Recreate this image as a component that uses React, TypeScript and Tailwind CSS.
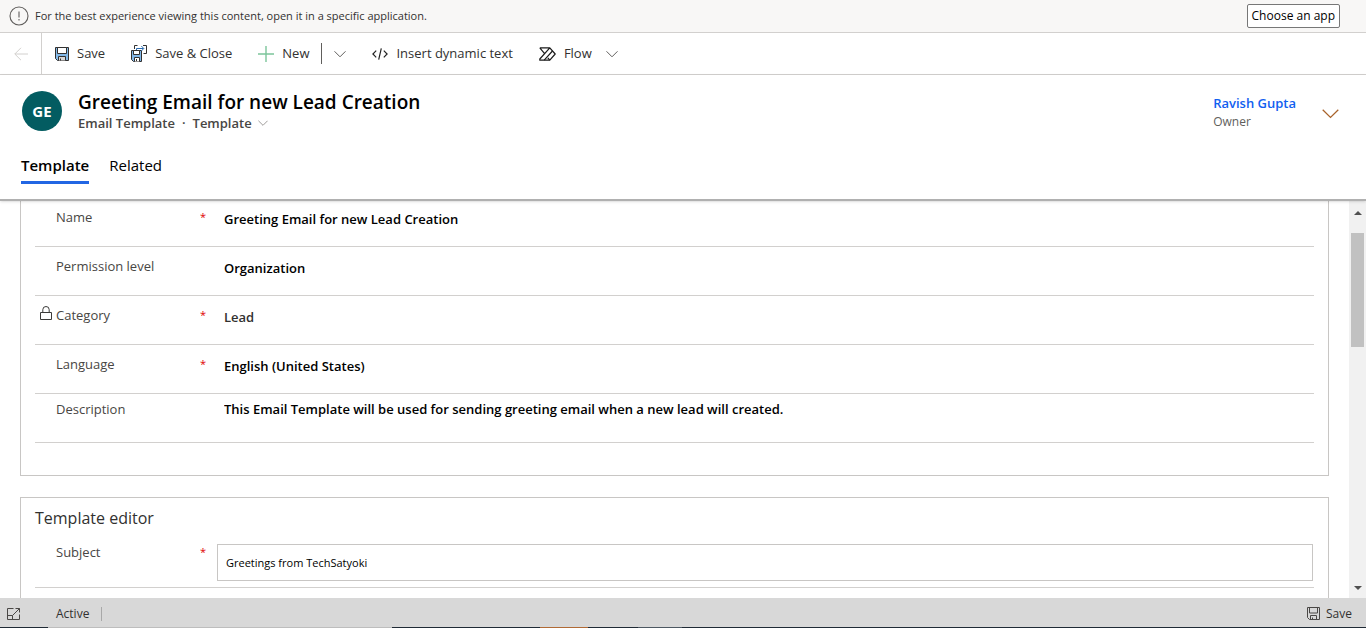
import type { ReactNode } from "react";

// Data Types
type Field = {
  id: string;
  label: string;
  value: string;
  required?: boolean;
  locked?: boolean;
  compact?: boolean;
};

const fields: Field[] = [
  { id: "name", label: "Name", value: "Greeting Email for new Lead Creation", required: true },
  { id: "permission", label: "Permission level", value: "Organization" },
  { id: "category", label: "Category", value: "Lead", required: true, locked: true },
  { id: "language", label: "Language", value: "English (United States)", required: true },
  {
    id: "description",
    label: "Description",
    value: "This Email Template will be used for sending greeting email when a new lead will created.",
    compact: true,
  },
];

// Colour strip along the bottom edge
const edge = [
  { width: 48, className: "bg-[#1f2a35]" },
  { width: 344, className: "bg-[#bdbdbd]" },
  { width: 148, className: "bg-[#1f2a35]" },
  { width: 48, className: "bg-[#b06a35]" },
  { width: 50, className: "bg-[#1f2a35]" },
  { width: 44, className: "bg-[#4d5862]" },
];

// Icons
const Chevron = ({ className, width = 12 }: { className: string; width?: number }) => (
  <svg width={width} height={width} viewBox="0 0 12 12" fill="none" stroke="currentColor" className={className} aria-hidden="true">
    <path d="M.5 3.3 6 8.8l5.5-5.5" strokeWidth={width > 14 ? 0.9 : 1} />
  </svg>
);

const InfoIcon = () => (
  <svg width="20" height="20" viewBox="0 0 20 20" fill="none" stroke="#605e5c" aria-hidden="true">
    <circle cx="10" cy="10" r="9" strokeWidth="1.1" />
    <path d="M10 5.5v6M10 13v1.5" strokeWidth="1.1" />
  </svg>
);

const BackIcon = () => (
  <svg width="14" height="14" viewBox="0 0 14 14" fill="none" stroke="#d2d0ce" aria-hidden="true">
    <path d="M14 7H.8M7 .8.8 7 7 13.2" />
  </svg>
);

const SaveIcon = () => (
  <svg width="14" height="14" viewBox="0 0 14 14" fill="none" stroke="#323130" aria-hidden="true">
    <path d="M.5.5h13v13h-11l-2-2z" fill="#83b9e8" />
    <path d="M2.5.5h9v6h-9z" fill="#fff" />
    <path d="M3.5 13.5v-4h7v4" fill="#d8d8d8" />
    <path d="M5.5 11.5v2" />
  </svg>
);

const SaveCloseIcon = () => (
  <svg width="16" height="17" viewBox="0 0 16 17" fill="none" stroke="#323130" aria-hidden="true">
    <path d="M.5 5.5h10v11h-8l-2-2z" fill="#83b9e8" />
    <path d="M2.5 5.5h6v4h-6z" fill="#fff" />
    <path d="M3.5 16.5v-4h5v4M5.5 14v2" fill="#fff" />
    <path d="M3.5 4V.5h3M12 .5h3.5v8h-3" />
    <path d="M5.5 5V3.5h7M10.3 1l2.5 2.5L10.3 6" stroke="#2b6cb0" />
  </svg>
);

const PlusIcon = () => (
  <svg width="16" height="16" viewBox="0 0 16 16" fill="none" stroke="#7cc59b" aria-hidden="true">
    <path d="M8 0v16M0 8h16" strokeWidth="1.4" />
  </svg>
);

const CodeIcon = () => (
  <svg width="16" height="12" viewBox="0 0 16 12" fill="none" stroke="#222" aria-hidden="true">
    <path d="M4.2 2.6.9 6l3.3 3.4M11.8 2.6 15.1 6l-3.3 3.4M9.3.4 6.7 11.6" strokeWidth="1.2" />
  </svg>
);

const FlowIcon = () => (
  <svg width="17" height="14" viewBox="0 0 17 14" fill="none" stroke="#1b1b1b" strokeWidth="1.2" strokeLinejoin="round" aria-hidden="true">
    <path d="M.8.8h10L16.2 7l-5.400 6.200H.8v-1.200L10.800.8M.8.8l5 6" />
    <path d="M5.200 13.200 13.500 4M10.800 13.200l-2-2.400" />
  </svg>
);

const LockIcon = () => (
  <svg width="12" height="15" viewBox="0 0 12 15" fill="none" stroke="#3b3a39" aria-hidden="true">
    <path d="M.5 6.5h11v7H.5zM2.8 6.5V3.7a3.2 3.2 0 0 1 6.400 0V6.500" />
  </svg>
);

const PopOutIcon = () => (
  <svg width="14" height="12" viewBox="0 0 14 12" fill="none" stroke="#4a4846" aria-hidden="true">
    <path d="M6.5.5h-6v11h12v-5M.5 7.500h5v4M5.500 7.500l7-7M8.500.5h4v4" />
  </svg>
);

const FooterSaveIcon = () => (
  <svg width="13" height="13" viewBox="0 0 13 13" fill="none" stroke="#4a4846" aria-hidden="true">
    <path d="M.5.5h12v12h-10l-2-2zM2.500.5v5.500h8V.5M3.500 12.500v-4h6v4M5.500 10.500v2" />
  </svg>
);

const Command = ({ icon, children }: { icon: ReactNode; children: ReactNode }) => (
  <button type="button" className="flex items-center gap-2 whitespace-nowrap text-[13px] text-[#323130]">
    {icon}
    {children}
  </button>
);

const FieldRow = ({ field }: { field: Field }) => (
  <div className={`flex h-[49px] items-start border-b border-[#d2d0ce] ${field.compact ? "pt-1" : "pt-2"}`}>
    <span className="flex w-[21px] shrink-0 justify-center pt-0.5">{field.locked && <LockIcon />}</span>
    <label htmlFor={field.id} className="w-36 shrink-0 text-[13px] leading-[22px] text-[#484644]">
      {field.label}
    </label>
    <span className="w-6 shrink-0 text-[11px] leading-[22px] text-[#e00000]">{field.required && "*"}</span>
    <input
      id={field.id}
      defaultValue={field.value}
      readOnly={field.locked}
      className={`min-w-0 flex-1 bg-transparent text-[13px] leading-[22px] font-semibold outline-none ${
        field.locked ? "text-[#323130]" : "text-black"
      } ${field.compact ? "" : "mt-0.5"}`}
    />
  </div>
);

const App = () => {
  return (
    <div className="flex h-screen flex-col overflow-hidden bg-white font-['Open_Sans','Noto_Sans',sans-serif] text-[#323130]">
      {/* App notice */}
      <div className="flex h-[33px] shrink-0 items-center border-b border-[#d2d0ce] bg-[#f8f7f6] pr-[26px] pl-[9px]">
        <InfoIcon />
        <p className="ml-1.5 flex-1 text-[11px]">For the best experience viewing this content, open it in a specific application.</p>
        <button type="button" className="h-6 rounded-xs border border-[#777] bg-white px-1 text-[12px] whitespace-nowrap text-black">
          Choose an app
        </button>
      </div>

      {/* Command bar */}
      <div className="flex h-[42px] shrink-0 border-b border-[#d2d0ce]">
        <button type="button" aria-label="Back" className="flex w-[42px] items-center justify-center border-r border-[#d2d0ce]">
          <BackIcon />
        </button>
        <div className="flex items-center gap-[26px] pl-[13px]">
          <Command icon={<SaveIcon />}>Save</Command>
          <Command icon={<SaveCloseIcon />}>Save &amp; Close</Command>
          <div className="flex items-center">
            <Command icon={<PlusIcon />}>New</Command>
            <span className="ml-3 h-[21px] w-px bg-[#605e5c]" />
            <button type="button" aria-label="More new options" className="ml-3">
              <Chevron className="text-[#605e5c]" />
            </button>
          </div>
          <Command icon={<CodeIcon />}>Insert dynamic text</Command>
          <div className="flex items-center gap-3.5">
            <Command icon={<FlowIcon />}>Flow</Command>
            <button type="button" aria-label="Flow options">
              <Chevron className="text-[#605e5c]" />
            </button>
          </div>
        </div>
      </div>

      {/* Record header */}
      <header className="z-10 shrink-0 border-b-2 border-[#b0b0b0] px-[21px] pt-4 pb-[15px] shadow-sm">
        <div className="flex items-start pl-px">
          <div className="flex size-10 items-center justify-center rounded-full bg-[#035c61] text-[15px] font-bold text-white">GE</div>
          <div className="ml-4 flex-1">
            <h1 className="text-[19px] leading-[22px] font-semibold text-black">Greeting Email for new Lead Creation</h1>
            <div className="flex items-center text-[13px] leading-5 font-semibold text-[#484644]">
              <span>Email Template</span>
              <span className="mx-[7px]">·</span>
              <button type="button" className="flex items-center gap-1.5">
                Template
                <Chevron width={10} className="text-[#8a8886]" />
              </button>
            </div>
          </div>
          <div className="mr-[26px] pt-0.5">
            <a href="#owner" className="block text-[13px] leading-5 font-semibold text-[#1160f0]">Ravish Gupta</a>
            <p className="text-[12px] leading-[18px] text-[#605e5c]">Owner</p>
          </div>
          <button type="button" aria-label="Expand header" className="mt-3.5 mr-1.5">
            <Chevron width={17} className="text-[#a8622a]" />
          </button>
        </div>
        <nav className="mt-5 flex gap-5 text-[15px] leading-6 text-black">
          <button type="button" className="border-b-3 border-[#2266e3] pb-1 font-semibold">Template</button>
          <button type="button" className="border-b-3 border-transparent pb-1">Related</button>
        </nav>
      </header>

      <div className="flex min-h-0 flex-1">
        {/* Form */}
        <main className="flex-1 overflow-hidden pr-5 pl-5">
          <section className="-mt-1 border border-[#c8c6c4] px-3.5 pb-8">
            {fields.map((field) => (
              <FieldRow key={field.id} field={field} />
            ))}
          </section>
          <section className="mt-[21px] border border-[#c8c6c4] px-3.5 pt-2 pb-10">
            <h2 className="text-[16px] leading-6">Template editor</h2>
            <div className="flex items-start border-b border-[#d2d0ce] pt-3.5 pb-1.5">
              <label htmlFor="subject" className="w-[165px] shrink-0 pl-[21px] text-[13px] leading-4 text-[#484644]">Subject</label>
              <span className="w-[17px] shrink-0 text-[11px] leading-4 text-[#e00000]">*</span>
              <input
                id="subject"
                defaultValue="Greetings from TechSatyoki"
                className="mr-px h-[37px] min-w-0 flex-1 border border-[#c8c6c4] px-2 text-[11px] text-black outline-none"
              />
            </div>
          </section>
        </main>

        {/* Scroll bar */}
        <div className="flex w-[17px] shrink-0 flex-col items-center bg-[#f1f1f1] pt-2.5 pb-2">
          <svg width="8" height="4" viewBox="0 0 8 4" fill="#505050" aria-hidden="true"><path d="M0 4 4 0l4 4z" /></svg>
          <div className="mt-[18px] h-[114px] w-[13px] bg-[#c1c1c1]" />
          <svg width="8" height="4" viewBox="0 0 8 4" fill="#505050" className="mt-auto" aria-hidden="true"><path d="m0 0 4 4 4-4z" /></svg>
        </div>
      </div>

      {/* Status bar */}
      <footer className="shrink-0 bg-[#d8d8d8] text-[12px]">
        <div className="flex h-[29px] items-center pt-0.5 pr-3.5 pl-[7px]">
          <button type="button" aria-label="Open in new window"><PopOutIcon /></button>
          <span className="ml-[35px]">Active</span>
          <span className="ml-3 h-3.5 w-px bg-[#a8a8a8]" />
          <button type="button" className="ml-auto flex items-center gap-1.5">
            <FooterSaveIcon />
            Save
          </button>
        </div>
        <div className="flex h-px bg-[#1f2a35]">
          {edge.map((part, i) => (
            <span key={i} className={part.className} style={{ width: part.width }} />
          ))}
        </div>
      </footer>
    </div>
  );
};

export default App;
